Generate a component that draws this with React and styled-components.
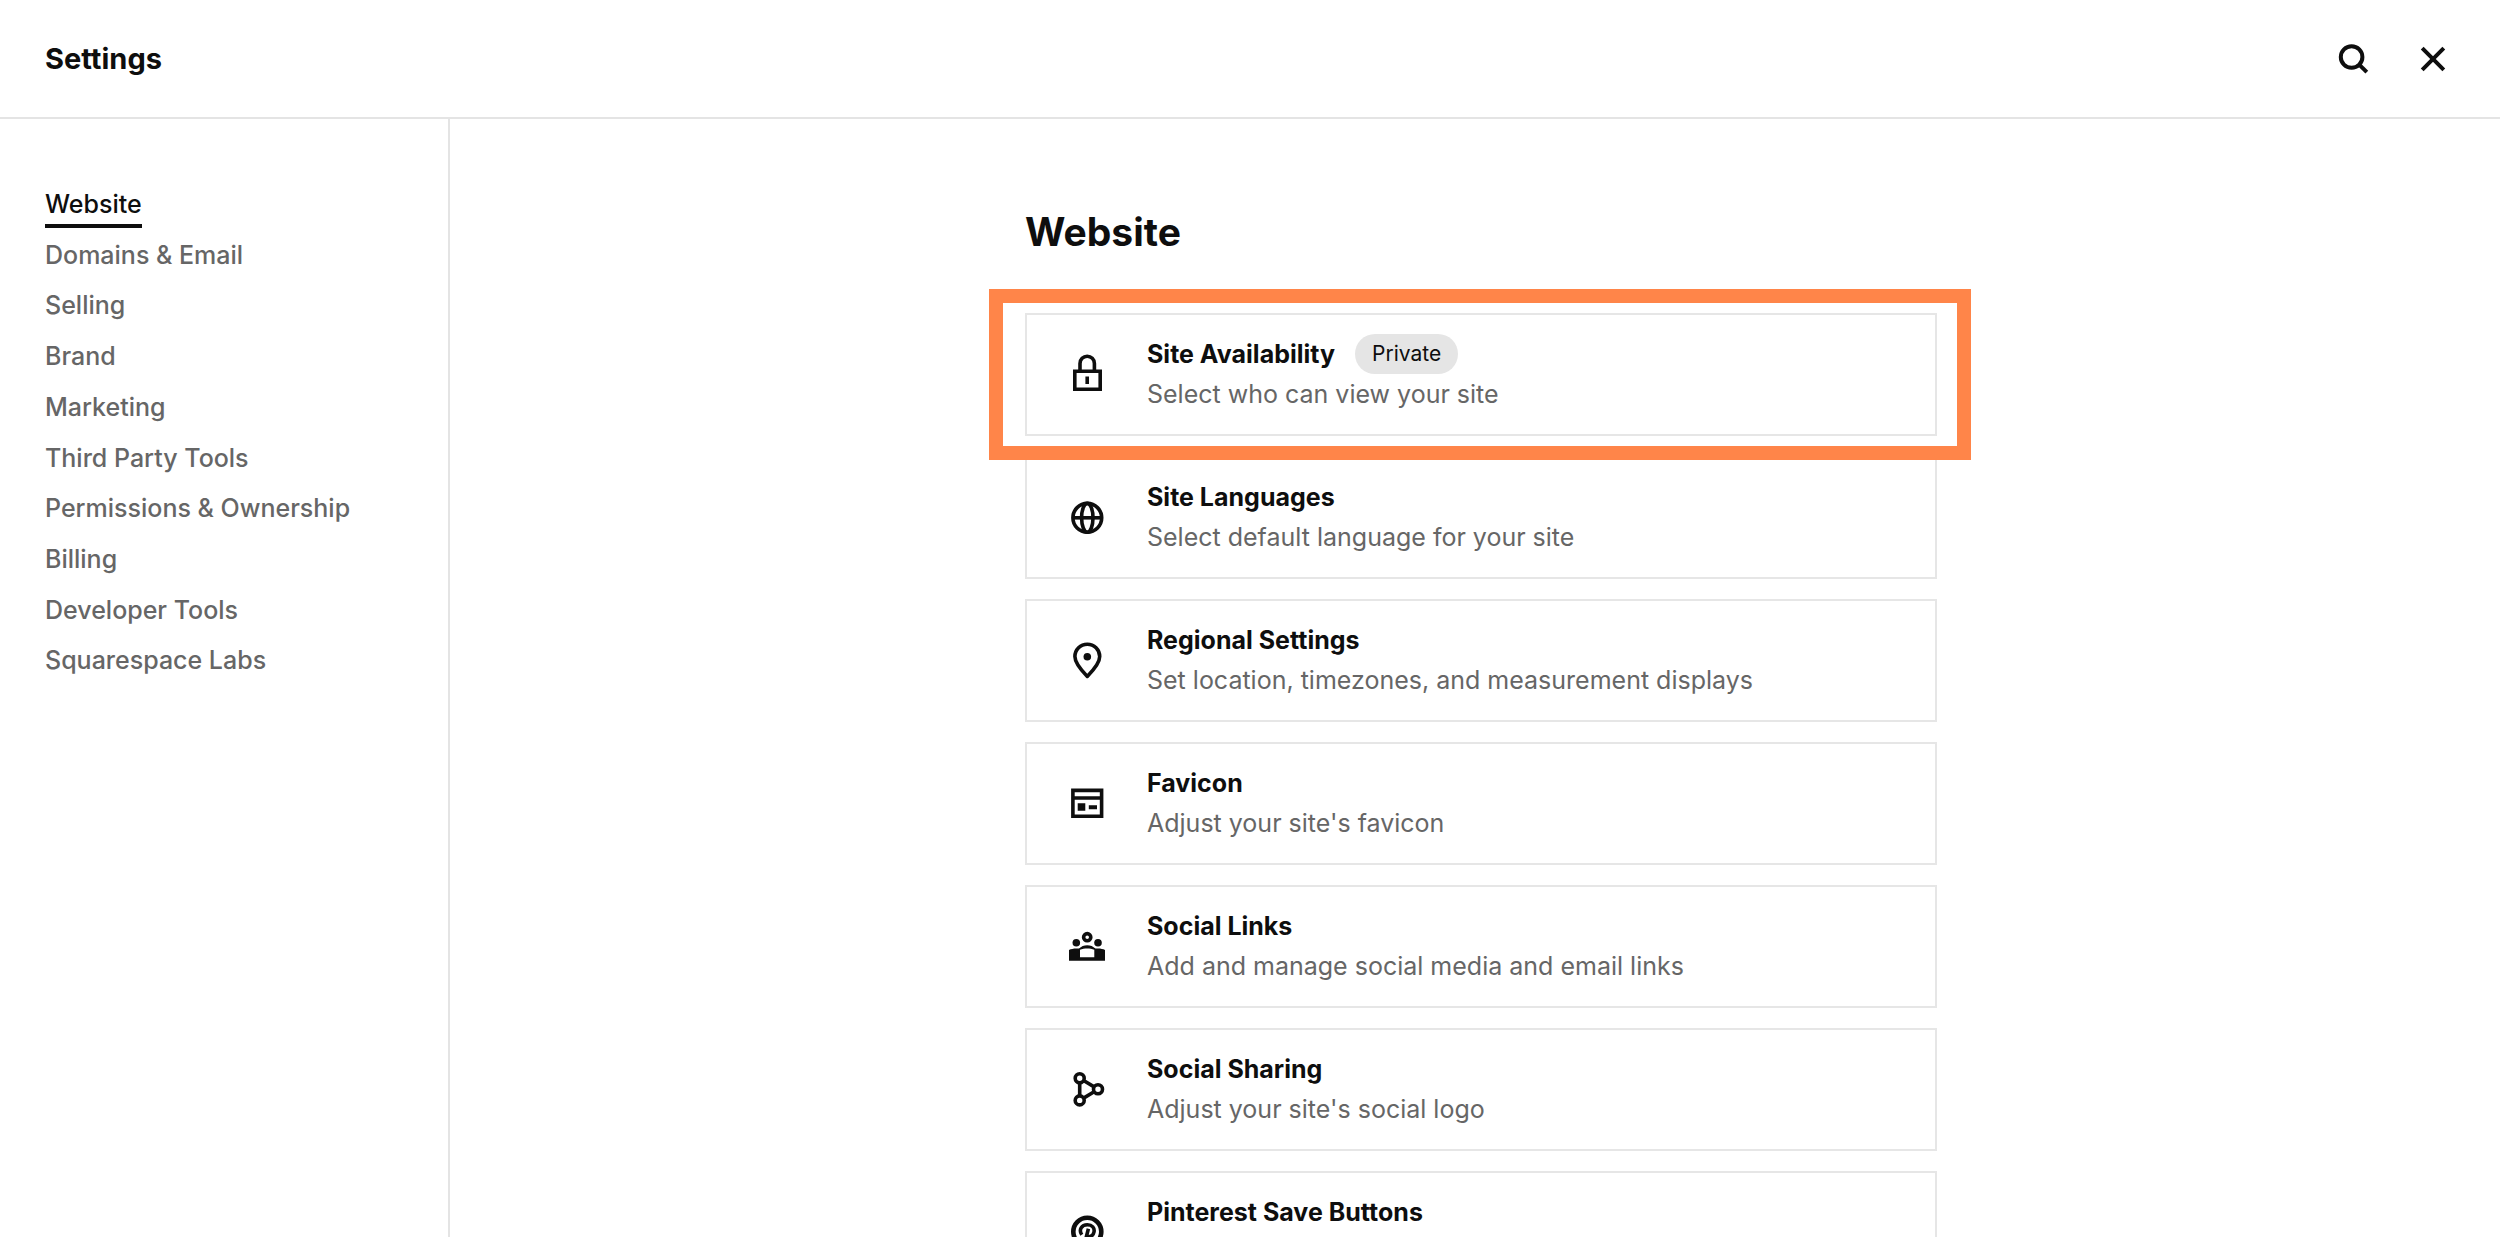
import React from 'react'
import styled, { createGlobalStyle } from 'styled-components'

const sections = [
  'Website',
  'Domains & Email',
  'Selling',
  'Brand',
  'Marketing',
  'Third Party Tools',
  'Permissions & Ownership',
  'Billing',
  'Developer Tools',
  'Squarespace Labs',
]

const LockIcon = () => (
  <Glyph viewBox="0 0 48 48">
    <path d="M11.8 20.3h25.4v18H11.8z" />
    <path d="M17 20v-7.6a7.2 7.2 0 0 1 14.4 0V20" />
    <path d="M24.2 25.5v7.5" />
  </Glyph>
)

const GlobeIcon = () => (
  <Glyph viewBox="0 0 48 48">
    <circle cx="24.3" cy="23.8" r="14.4" />
    <ellipse cx="24.3" cy="23.8" rx="5.7" ry="14.4" />
    <path d="M10 23.8h28.6" />
  </Glyph>
)

const PinIcon = () => (
  <Glyph viewBox="0 0 48 48">
    <path d="M24.3 39.4C20.5 35.6 11.9 27 11.9 19.6a12.4 12.4 0 0 1 24.8 0C36.7 27 28.1 35.6 24.3 39.4z" strokeLinejoin="round" />
    <Solid as="circle" cx="24.3" cy="19.8" r="3.8" />
  </Glyph>
)

const BrowserIcon = () => (
  <Glyph viewBox="0 0 48 48">
    <path d="M9.9 10.4h28.7v25.8H9.9zM9.9 18h28.7" />
    <Solid d="M14.7 23.2h7.6v7.6h-7.6zM25.8 25.2H34v4h-8.2z" />
  </Glyph>
)

const PeopleIcon = () => (
  <Glyph viewBox="0 0 48 48">
    <circle cx="24.2" cy="14.2" r="3.6" />
    <Solid as="circle" cx="13.3" cy="19.8" r="3.8" />
    <Solid as="circle" cx="35" cy="19.8" r="3.8" />
    <Solid
      fillRule="evenodd"
      d="M6 37.8V27c2.5-1.3 6-1.8 10-1.4 2.2-2.2 5-3.4 8.2-3.4s6 1.2 8.2 3.4c4-.4 7.2.1 9.6 1.4v10.8zM17 34.2h14.3v-7.4c-4.3-1.7-10-1.7-14.3 0z"
    />
  </Glyph>
)

const ShareIcon = () => (
  <Glyph viewBox="0 0 48 48">
    <circle cx="16.7" cy="12.2" r="4.5" />
    <circle cx="16.7" cy="34.4" r="4.5" />
    <circle cx="35" cy="23.3" r="4.5" />
    <path d="M16.7 16.7v13.2M20.6 14.5l10.5 6.4M20.6 32.1l10.5-6.4" />
  </Glyph>
)

const PinterestIcon = () => (
  <Glyph viewBox="0 0 48 48">
    <circle cx="24.3" cy="22.8" r="14" strokeWidth="4.6" />
    <path d="M18.8 25.8c-3.4-5-.2-10 5.6-10 4.8 0 7.4 3.2 6.6 7.2-.8 4.3-5 5.8-7.4 3.2M25.4 19.8l-3.6 14" />
  </Glyph>
)

const options = [
  { title: 'Site Availability', text: 'Select who can view your site', icon: LockIcon, badge: 'Private', marked: true },
  { title: 'Site Languages', text: 'Select default language for your site', icon: GlobeIcon },
  { title: 'Regional Settings', text: 'Set location, timezones, and measurement displays', icon: PinIcon },
  { title: 'Favicon', text: "Adjust your site's favicon", icon: BrowserIcon },
  { title: 'Social Links', text: 'Add and manage social media and email links', icon: PeopleIcon },
  { title: 'Social Sharing', text: "Adjust your site's social logo", icon: ShareIcon },
  { title: 'Pinterest Save Buttons', text: '', icon: PinterestIcon },
]

const Option = ({ item }) => {
  const Icon = item.icon
  return (
    <Item>
      <Card href="#">
        <Icon />
        <CardInfo>
          <CardTitle>
            {item.title}
            {item.badge && <Badge>{item.badge}</Badge>}
          </CardTitle>
          <CardText>{item.text}</CardText>
        </CardInfo>
      </Card>
      {item.marked && <Marker />}
    </Item>
  )
}

const App = () => {
  return (
    <Page>
      <GlobalStyle />
      <Header>
        <Title>Settings</Title>
        <Actions>
          <IconButton aria-label="Search">
            <Tool viewBox="0 0 32 32">
              <circle cx="14.6" cy="14" r="10.8" />
              <path d="M22.2 21.6l7.6 7.6" />
            </Tool>
          </IconButton>
          <IconButton aria-label="Close">
            <Tool viewBox="0 0 32 32">
              <path d="M5.2 5.2l21.6 21.6M26.8 5.2L5.2 26.8" />
            </Tool>
          </IconButton>
        </Actions>
      </Header>
      <Body>
        <Sidebar>
          <NavList>
            {sections.map((name, i) => (
              <li key={name}>
                <NavLink href="#" $active={i === 0}>{name}</NavLink>
              </li>
            ))}
          </NavList>
        </Sidebar>
        <Main>
          <Content>
            <Heading>Website</Heading>
            <List>
              {options.map((item) => (
                <Option item={item} key={item.title} />
              ))}
            </List>
          </Content>
        </Main>
      </Body>
    </Page>
  )
}

export default App

const GlobalStyle = createGlobalStyle`
  * {
    box-sizing: border-box;
  }
  body {
    margin: 0;
    background: #fff;
    color: #0e0e0e;
    font-family: Inter, "Liberation Sans", sans-serif;
  }
`

const Page = styled.div`
  height: 100vh;
  display: flex;
  flex-direction: column;
  overflow: hidden;
`

const Header = styled.header`
  flex: none;
  height: 119px;
  padding: 0 47px 0 45px;
  display: flex;
  align-items: center;
  justify-content: space-between;
  border-bottom: 2px solid #e4e4e4;
`

const Title = styled.h1`
  margin: 0;
  font-size: 29px;
  font-weight: 700;
  line-height: 36px;
`

const Actions = styled.div`
  display: flex;
  gap: 40px;
`

const IconButton = styled.button`
  width: 40px;
  height: 40px;
  padding: 0;
  display: flex;
  align-items: center;
  justify-content: center;
  border: 0;
  background: none;
  color: inherit;
  cursor: pointer;
`

const Tool = styled.svg`
  width: 32px;
  height: 32px;
  fill: none;
  stroke: currentColor;
  stroke-width: 4;
`

const Body = styled.div`
  flex: 1;
  min-height: 0;
  display: flex;
`

const Sidebar = styled.nav`
  flex: none;
  width: 450px;
  padding: 68px 45px;
  border-right: 2px solid #e4e4e4;
`

const NavList = styled.ul`
  height: 507px;
  margin: 0;
  padding: 0;
  display: grid;
  grid-auto-rows: 1fr;
  list-style: none;
`

const NavLink = styled.a`
  display: inline-block;
  height: 41px;
  font-size: 25px;
  font-weight: 500;
  line-height: 34px;
  white-space: nowrap;
  text-decoration: none;
  color: ${(props) => (props.$active ? '#0e0e0e' : '#666')};
  border-bottom: 4px solid ${(props) => (props.$active ? '#0e0e0e' : 'transparent')};
`

const Main = styled.main`
  flex: 1;
  min-width: 0;
  padding: 88px 0 0 12px;
  overflow: hidden;
`

const Content = styled.div`
  width: 100%;
  max-width: 912px;
  margin: 0 auto;
`

const Heading = styled.h2`
  margin: 0 0 56px;
  font-size: 39px;
  font-weight: 700;
  line-height: 50px;
`

const List = styled.ul`
  margin: 0;
  padding: 0;
  display: flex;
  flex-direction: column;
  gap: 20px;
  list-style: none;
`

const Item = styled.li`
  position: relative;
`

const Card = styled.a`
  height: 123px;
  padding: 0 36px;
  display: flex;
  align-items: center;
  gap: 36px;
  border: 2px solid #e6e6e6;
  color: inherit;
  text-decoration: none;
`

const CardInfo = styled.div`
  padding-bottom: 2px;
`

const CardTitle = styled.div`
  display: flex;
  align-items: center;
  gap: 20px;
  font-size: 25px;
  font-weight: 700;
  line-height: 40px;
`

const CardText = styled.div`
  min-height: 40px;
  font-size: 25px;
  line-height: 40px;
  color: #666;
`

const Badge = styled.span`
  height: 40px;
  padding: 0 17px;
  border-radius: 20px;
  background: #e5e5e5;
  font-size: 21px;
  font-weight: 400;
`

// orange frame drawn over the card and the gap around it
const Marker = styled.div`
  position: absolute;
  z-index: 1;
  inset: -24px -34px -24px -36px;
  border: 14px solid #ff8549;
  box-shadow: inset 0 0 0 10px #fff;
  pointer-events: none;
`

const Glyph = styled.svg`
  flex: none;
  width: 48px;
  height: 48px;
  fill: none;
  stroke: currentColor;
  stroke-width: 3.6;
`

const Solid = styled.path`
  fill: currentColor;
  stroke: none;
`
